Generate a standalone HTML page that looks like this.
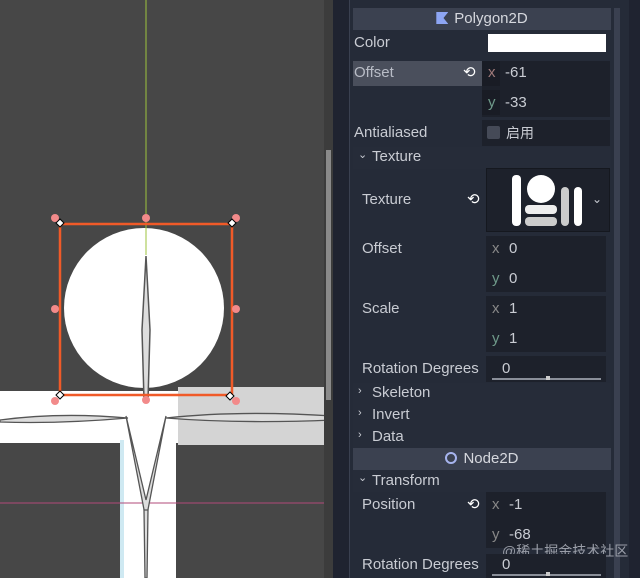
<!DOCTYPE html>
<html><head><style>
*{margin:0;padding:0;box-sizing:border-box}
body{width:640px;height:578px;overflow:hidden;background:#474747;font-family:"Liberation Sans","Noto Sans CJK SC",sans-serif;position:relative}
.a{position:absolute}
.panel{left:336px;top:0;width:304px;height:578px;background:#1f2330}
.inner{left:349px;top:0;width:280px;height:578px;background:#252b38;border-left:1px solid #3a4050}
.t{position:absolute;color:#c9ccd3;font-size:15px;white-space:nowrap}
.in{position:absolute;background:#1d212b}
.hdr{position:absolute;left:353px;width:258px;height:22px;background:#3b4150;color:#d6d8de;font-size:15px;text-align:center;line-height:22px}
.xl{color:#a07a7a}.yl{color:#6f9a8a}
.sec{position:absolute;left:353px;width:258px;height:22px;background:#262c39}
</style></head><body>
<svg class="a" style="left:0;top:0" width="336" height="578">
<rect width="336" height="578" fill="#474747"/>
<rect x="0" y="391" width="180" height="52" fill="#fff"/>
<rect x="178" y="387" width="155" height="58" fill="#d4d4d4"/>
<rect x="120" y="440" width="56" height="138" fill="#fff"/>
<rect x="120" y="440" width="4" height="138" fill="#cfe9f2"/>
<circle cx="144" cy="308" r="80" fill="#fff"/>
<line x1="146" y1="0" x2="146" y2="255" stroke="#9cc33c" stroke-width="1"/>
<line x1="0" y1="503" x2="333" y2="503" stroke="#b04a7a" stroke-width="1"/>
<path d="M146 256 L150 330 L148 400 L144 400 L142 330 Z" fill="#ddd" stroke="#555" stroke-width="1.5"/>
<path d="M0 420 Q60 412 128 418 Q60 424 0 422 Z" fill="#ddd" stroke="#555" stroke-width="1.3"/>
<path d="M166 418 Q240 410 333 416 L333 420 Q240 424 166 418 Z" fill="#ddd" stroke="#555" stroke-width="1.3"/>
<path d="M126 416 L146 520 L166 416 L146 500 Z" fill="#ddd" stroke="#555" stroke-width="1.3"/>
<path d="M144 510 L148 510 L147 578 L145 578 Z" fill="#ddd" stroke="#555" stroke-width="1.3"/>
<rect x="60" y="224" width="172" height="171" fill="none" stroke="#f05a28" stroke-width="2.5"/>
<g fill="#f28a8a"><circle cx="55" cy="218" r="4"/><circle cx="146" cy="218" r="4"/><circle cx="236" cy="218" r="4"/><circle cx="55" cy="309" r="4"/><circle cx="236" cy="309" r="4"/><circle cx="55" cy="401" r="4"/><circle cx="236" cy="401" r="4"/><circle cx="146" cy="400" r="4"/></g>
<g fill="#fff" stroke="#000" stroke-width="1"><path d="M60 219 l4 4 -4 4 -4 -4z"/><path d="M232 219 l4 4 -4 4 -4 -4z"/><path d="M60 391 l4 4 -4 4 -4 -4z"/><path d="M230 392 l4 4 -4 4 -4 -4z"/></g>
<rect x="324" y="0" width="12" height="578" fill="#3c3c3c"/>
<rect x="326" y="150" width="5" height="250" fill="#8a8a8a"/>
<rect x="333" y="0" width="3" height="578" fill="#1f2330"/>
</svg>
<div class="a panel"></div>
<div class="a inner"></div>
<div class="a" style="left:614px;top:8px;width:6px;height:570px;background:#3a4050"></div>
<div class="hdr" style="top:8px"><span style="display:inline-block;width:12px;height:12px;background:#8da5f3;vertical-align:-1px;margin-right:6px;clip-path:polygon(0 0,100% 0,60% 50%,100% 100%,0 100%)"></span>Polygon2D</div>
<div class="t" style="left:354px;top:34px">Color</div>
<div class="a" style="left:488px;top:34px;width:118px;height:18px;background:#fff"></div>
<div class="a" style="left:353px;top:61px;width:129px;height:25px;background:#4a4f5c"></div>
<div class="t" style="left:354px;top:64px;color:#b8bcc6">Offset</div>
<div class="t" style="left:463px;top:63px;font-size:15px;color:#fff">⟲</div>
<div class="in" style="left:482px;top:61px;width:128px;height:56px"></div>
<div class="in" style="left:482px;top:61px;width:18px;height:25px;background:#191c25"></div>
<div class="in" style="left:482px;top:90px;width:18px;height:25px;background:#191c25"></div>
<div class="t xl" style="left:488px;top:64px">x</div><div class="t" style="left:505px;top:64px">-61</div>
<div class="t yl" style="left:488px;top:94px">y</div><div class="t" style="left:505px;top:94px">-33</div>
<div class="t" style="left:354px;top:124px">Antialiased</div>
<div class="in" style="left:482px;top:120px;width:128px;height:26px"></div>
<div class="a" style="left:487px;top:126px;width:13px;height:13px;background:#454a57;border-radius:2px"></div>
<div class="t" style="left:506px;top:123px;font-size:14px">启用</div>
<div class="sec" style="top:147px"></div>
<div class="t" style="left:358px;top:148px;font-size:11px">⌄</div>
<div class="t" style="left:372px;top:148px">Texture</div>
<div class="t" style="left:362px;top:191px">Texture</div>
<div class="t" style="left:467px;top:190px;font-size:15px;color:#fff">⟲</div>
<div class="a" style="left:492px;top:193px;width:10px;height:12px;background:#ddd"></div>
<div class="in" style="left:486px;top:168px;width:124px;height:64px;border:1px solid #15181f"></div>
<div class="a" style="left:512px;top:175px;width:9px;height:51px;background:#fff;border-radius:4px"></div>
<div class="a" style="left:527px;top:175px;width:28px;height:28px;background:#fff;border-radius:50%"></div>
<div class="a" style="left:525px;top:205px;width:32px;height:9px;background:#eee;border-radius:4px"></div>
<div class="a" style="left:525px;top:217px;width:32px;height:9px;background:#ccc;border-radius:4px"></div>
<div class="a" style="left:561px;top:187px;width:8px;height:39px;background:#ccc;border-radius:4px"></div>
<div class="a" style="left:574px;top:187px;width:8px;height:39px;background:#fff;border-radius:4px"></div>
<div class="t" style="left:592px;top:192px;font-size:12px">⌄</div>
<div class="t" style="left:362px;top:240px">Offset</div>
<div class="in" style="left:486px;top:236px;width:120px;height:56px"></div>
<div class="t xl" style="left:492px;top:240px;color:#888">x</div><div class="t" style="left:509px;top:240px">0</div>
<div class="t yl" style="left:492px;top:270px">y</div><div class="t" style="left:509px;top:270px">0</div>
<div class="t" style="left:362px;top:300px">Scale</div>
<div class="in" style="left:486px;top:296px;width:120px;height:56px"></div>
<div class="t xl" style="left:492px;top:300px;color:#888">x</div><div class="t" style="left:509px;top:300px">1</div>
<div class="t yl" style="left:492px;top:330px">y</div><div class="t" style="left:509px;top:330px">1</div>
<div class="t" style="left:362px;top:360px">Rotation Degrees</div>
<div class="in" style="left:486px;top:356px;width:120px;height:26px"></div>
<div class="t" style="left:502px;top:360px">0</div>
<div class="a" style="left:492px;top:378px;width:109px;height:2px;background:#8a8f99"></div>
<div class="a" style="left:546px;top:376px;width:4px;height:4px;background:#ccc"></div>
<div class="sec" style="top:383px"></div><div class="sec" style="top:405px"></div><div class="sec" style="top:427px"></div>
<div class="t" style="left:358px;top:385px;font-size:11px">›</div><div class="t" style="left:372px;top:384px">Skeleton</div>
<div class="t" style="left:358px;top:407px;font-size:11px">›</div><div class="t" style="left:372px;top:406px">Invert</div>
<div class="t" style="left:358px;top:429px;font-size:11px">›</div><div class="t" style="left:372px;top:428px">Data</div>
<div class="hdr" style="top:448px"><span style="display:inline-block;width:12px;height:12px;border:2px solid #a7b4ee;border-radius:50%;vertical-align:-1px;margin-right:6px"></span>Node2D</div>
<div class="sec" style="top:470px"></div>
<div class="t" style="left:358px;top:471px;font-size:11px">⌄</div><div class="t" style="left:372px;top:472px">Transform</div>
<div class="t" style="left:362px;top:496px">Position</div>
<div class="t" style="left:467px;top:495px;font-size:15px;color:#fff">⟲</div>
<div class="in" style="left:486px;top:492px;width:120px;height:56px"></div>
<div class="t xl" style="left:492px;top:496px;color:#888">x</div><div class="t" style="left:509px;top:496px">-1</div>
<div class="t yl" style="left:492px;top:526px;color:#888">y</div><div class="t" style="left:509px;top:526px">-68</div>
<div class="t" style="left:502px;top:541px;font-size:14px;color:#9a9ea8">@稀土掘金技术社区</div>
<div class="t" style="left:362px;top:556px">Rotation Degrees</div>
<div class="in" style="left:486px;top:554px;width:120px;height:24px"></div>
<div class="t" style="left:502px;top:556px">0</div>
<div class="a" style="left:492px;top:574px;width:109px;height:2px;background:#8a8f99"></div>
<div class="a" style="left:546px;top:572px;width:4px;height:4px;background:#ccc"></div>
</body></html>
